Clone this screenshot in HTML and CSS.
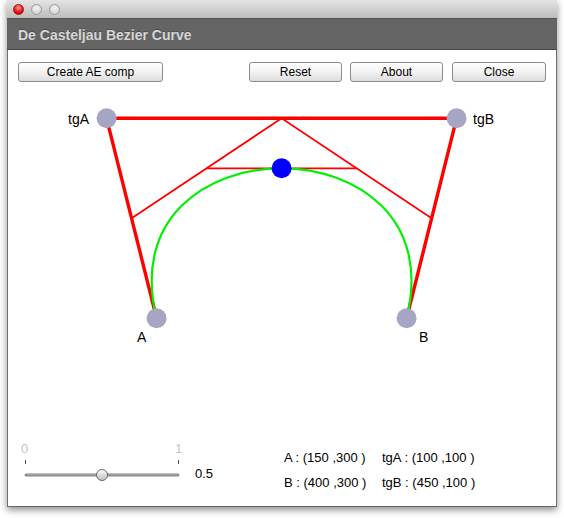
FILE: index.html
```html
<!DOCTYPE html>
<html>
<head>
<meta charset="utf-8">
<link rel="stylesheet" href="styles.css">
</head>
<body>
<div class="window">
  <div class="chrome">
    <span class="light red"></span>
    <span class="light"></span>
    <span class="light"></span>
  </div>
  <div class="titlebar">De Casteljau Bezier Curve</div>
  <div class="content">
    <div class="toolbar">
      <button class="btn btn-wide">Create AE comp</button>
      <div class="spacer"></div>
      <button class="btn">Reset</button>
      <button class="btn">About</button>
      <button class="btn btn-close">Close</button>
    </div>
    <svg class="canvas" width="548" height="353" viewBox="8 82 548 353">
      <g transform="translate(6.6,18.3)">
        <line class="hull" x1="150" y1="300" x2="100" y2="100"/>
        <line class="hull" x1="100" y1="100" x2="450" y2="100"/>
        <line class="hull" x1="450" y1="100" x2="400" y2="300"/>
        <polyline class="cast" points="125,200 275,100 425,200"/>
        <line class="cast" x1="200" y1="150" x2="350" y2="150"/>
        <path class="curve" d="M150,300 C100,100 450,100 400,300"/>
        <circle class="pt" cx="100" cy="100" r="10"/>
        <circle class="pt" cx="450" cy="100" r="10"/>
        <circle class="pt" cx="150" cy="300" r="10"/>
        <circle class="pt" cx="400" cy="300" r="10"/>
        <circle class="dot" cx="275" cy="150" r="10"/>
      </g>
      <text class="lbl" x="68" y="124">tgA</text>
      <text class="lbl" x="473" y="124">tgB</text>
      <text class="lbl" x="137" y="342">A</text>
      <text class="lbl" x="419" y="342">B</text>
    </svg>
    <div class="bottom">
      <div class="sliderbox">
        <svg class="slider" width="170" height="50" viewBox="18 436 170 50">
          <defs>
            <linearGradient id="thumb" x1="0" y1="0" x2="0" y2="1">
              <stop offset="0" stop-color="#ffffff"/>
              <stop offset="1" stop-color="#bdbdbd"/>
            </linearGradient>
          </defs>
          <text class="tick-lbl" x="21" y="453">0</text>
          <text class="tick-lbl" x="175" y="453">1</text>
          <line class="tick" x1="25.5" y1="460" x2="25.5" y2="464"/>
          <line class="tick" x1="178.5" y1="460" x2="178.5" y2="464"/>
          <line class="track" x1="26" y1="475" x2="178" y2="475"/>
          <line class="track-hi" x1="26" y1="474" x2="178" y2="474"/>
          <circle cx="102" cy="475" r="5.5" fill="url(#thumb)" stroke="#6a6a6a" stroke-width="1"/>
        </svg>
        <div class="value">0.5</div>
      </div>
      <div class="coords">
        <span>A : (150 ,300 )</span><span>tgA : (100 ,100 )</span>
        <span>B : (400 ,300 )</span><span>tgB : (450 ,100 )</span>
      </div>
    </div>
  </div>
</div>
</body>
</html>
```
FILE: styles.css
```css
html, body {
  margin: 0;
  padding: 0;
  background: #ffffff;
}
body {
  font-family: "Liberation Sans", Arial, sans-serif;
  width: 564px;
  height: 518px;
  overflow: hidden;
}
.window {
  margin-left: 7px;
  width: 550px;
  height: 507px;
  box-sizing: border-box;
  border-left: 1px solid #707070;
  border-right: 1px solid #707070;
  border-bottom: 1px solid #666666;
  box-shadow: 0 3px 7px rgba(0, 0, 0, 0.45);
  display: flex;
  flex-direction: column;
  background: #ffffff;
}
.chrome {
  height: 18px;
  margin: 0 -1px;
  background: linear-gradient(#e4e4e4, #bdbdbd);
  border-bottom: 1px solid #525252;
  display: flex;
  align-items: center;
  gap: 7px;
  padding-left: 6px;
}
.light {
  width: 11px;
  height: 11px;
  border-radius: 50%;
  box-sizing: border-box;
  border: 1px solid #9a9a9a;
  background: radial-gradient(circle at 50% 35%, #f4f4f4, #c9c9c9);
}
.light.red {
  border-color: #a01010;
  background: radial-gradient(circle at 50% 30%, #ff9a9a, #e81010 60%, #b00000);
}
.titlebar {
  height: 29px;
  padding-top: 1px;
  margin: 0 -1px;
  background: #646464;
  border-bottom: 1px solid #454545;
  color: #d6d6d6;
  font-weight: bold;
  font-size: 14px;
  line-height: 30px;
  padding-left: 11px;
  text-shadow: 0 -1px 0 rgba(0, 0, 0, 0.25);
}
.content {
  flex: 1;
  display: flex;
  flex-direction: column;
}
.toolbar {
  display: flex;
  padding: 12px 10px 0 10px;
  height: 20px;
}
.spacer {
  flex: 1;
}
.btn {
  height: 20px;
  width: 93px;
  margin: 0 0 0 8px;
  padding: 0;
  box-sizing: border-box;
  border: 1px solid #8c8c8c;
  border-radius: 3px;
  background: linear-gradient(#ffffff, #f2f2f2 50%, #dcdcdc);
  font-family: "Liberation Sans", Arial, sans-serif;
  font-size: 12px;
  color: #000000;
  line-height: 18px;
}
.btn-wide {
  width: 145px;
  margin-left: 0;
}
.btn-close {
  width: 94px;
  margin-left: 9px;
}
.canvas {
  display: block;
  flex: none;
}
.hull {
  stroke: #ff0000;
  stroke-width: 3.4;
}
.cast {
  stroke: #ff0000;
  stroke-width: 1.8;
  fill: none;
}
.curve {
  stroke: #00f000;
  stroke-width: 2.2;
  fill: none;
}
.pt {
  fill: #a6a6c4;
}
.dot {
  fill: #0000ff;
}
.lbl {
  font-family: "Liberation Sans", Arial, sans-serif;
  font-size: 14px;
  fill: #000000;
}
.bottom {
  display: flex;
  padding-left: 10px;
  height: 71px;
}
.sliderbox {
  width: 266px;
  display: flex;
}
.slider {
  display: block;
  margin-top: 1px;
}
.tick-lbl {
  font-family: "Liberation Sans", Arial, sans-serif;
  font-size: 13px;
  fill: #c4c4c4;
}
.tick {
  stroke: #555555;
  stroke-width: 1;
}
.track {
  stroke: #8e8e8e;
  stroke-width: 3;
  stroke-linecap: round;
}
.track-hi {
  stroke: #b4b4b4;
  stroke-width: 1;
}
.value {
  margin-left: 7px;
  margin-top: 31px;
  font-size: 13px;
  line-height: 15px;
}
.coords {
  display: grid;
  grid-template-columns: 98px auto;
  grid-auto-rows: 25px;
  margin-top: 10px;
  font-size: 13px;
  line-height: 25px;
  align-content: start;
}
```
